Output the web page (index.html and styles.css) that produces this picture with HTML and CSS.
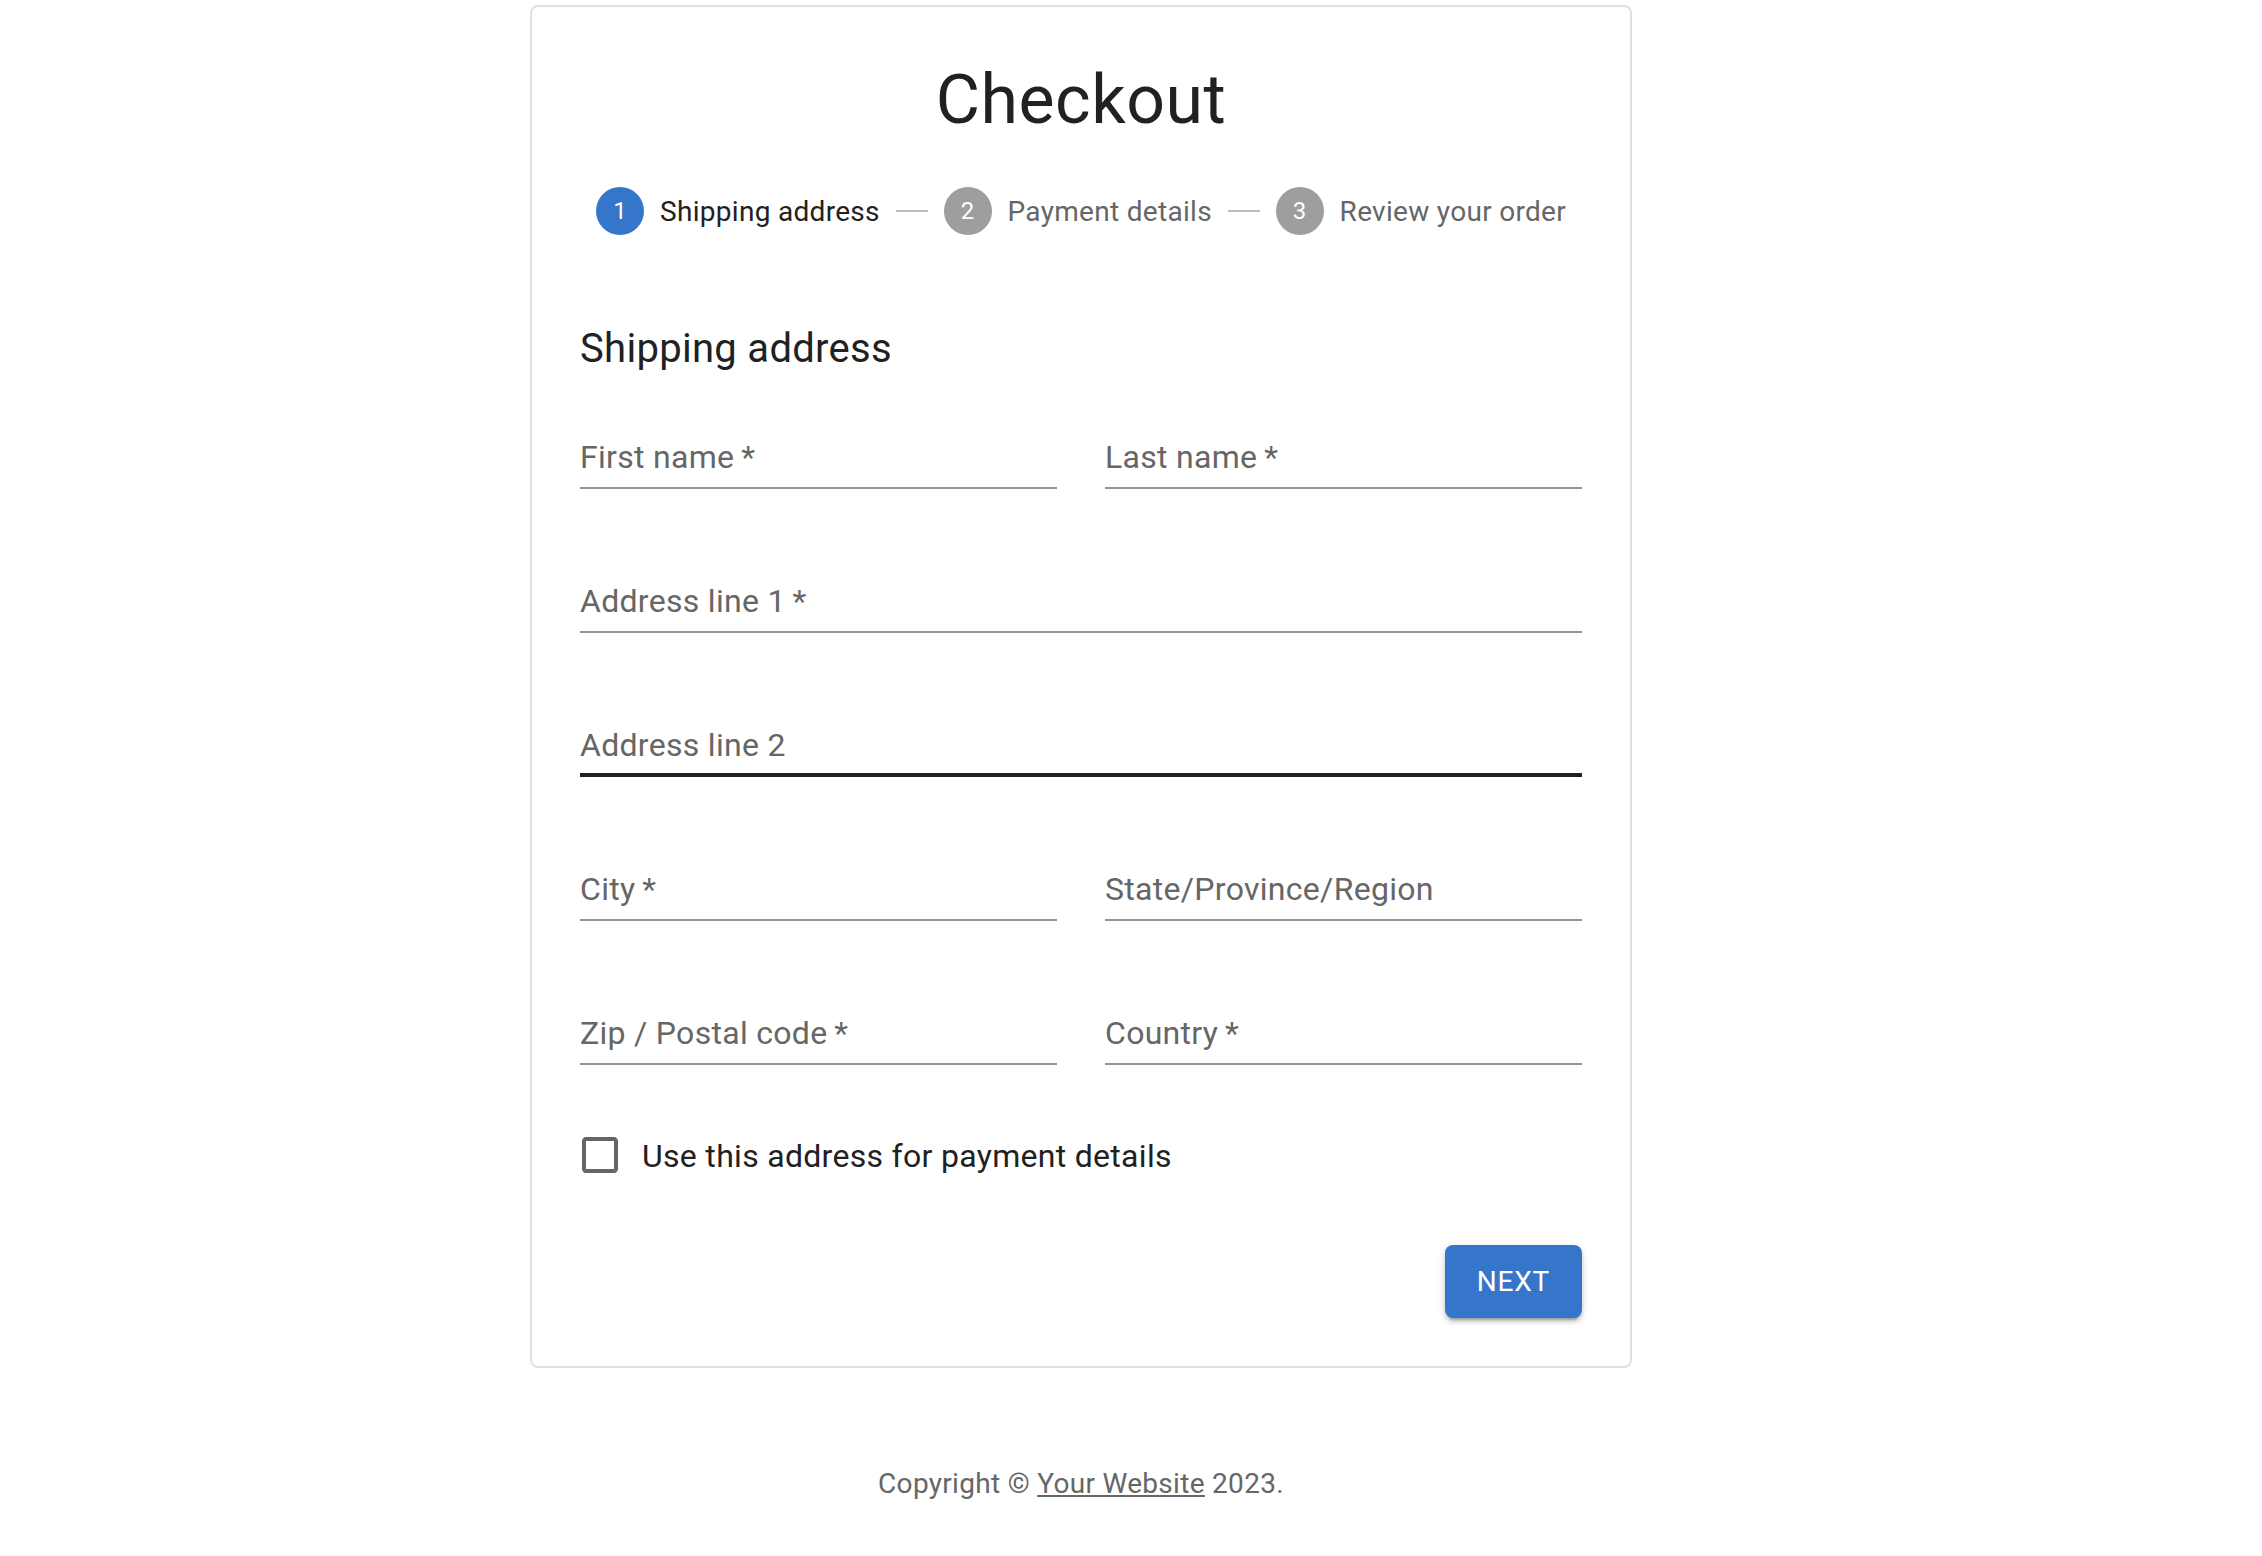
FILE: index.html
```html
<!DOCTYPE html>
<html lang="en">
<head>
<meta charset="utf-8">
<title>Checkout</title>
<link rel="stylesheet" href="styles.css">
</head>
<body>
<div class="page">
  <main class="container">
    <div class="card">
      <h1 class="title">Checkout</h1>
      <div class="stepper">
        <div class="step">
          <span class="step-icon active">1</span>
          <span class="step-label active">Shipping address</span>
        </div>
        <div class="connector"></div>
        <div class="step">
          <span class="step-icon">2</span>
          <span class="step-label">Payment details</span>
        </div>
        <div class="connector"></div>
        <div class="step">
          <span class="step-icon">3</span>
          <span class="step-label">Review your order</span>
        </div>
      </div>
      <h2 class="section-title">Shipping address</h2>
      <div class="form-grid">
        <div class="field"><span class="field-label">First name&thinsp;*</span></div>
        <div class="field"><span class="field-label">Last name&thinsp;*</span></div>
        <div class="field full"><span class="field-label">Address line 1&thinsp;*</span></div>
        <div class="field full hover"><span class="field-label">Address line 2</span></div>
        <div class="field"><span class="field-label">City&thinsp;*</span></div>
        <div class="field"><span class="field-label">State/Province/Region</span></div>
        <div class="field"><span class="field-label">Zip / Postal code&thinsp;*</span></div>
        <div class="field"><span class="field-label">Country&thinsp;*</span></div>
        <label class="check-row full">
          <span class="check-box">
            <svg viewBox="0 0 24 24" width="48" height="48"><path fill="#666666" d="M19 5v14H5V5h14m0-2H5c-1.1 0-2 .9-2 2v14c0 1.1.9 2 2 2h14c1.1 0 2-.9 2-2V5c0-1.1-.9-2-2-2z"/></svg>
          </span>
          <span class="check-label">Use this address for payment details</span>
        </label>
      </div>
      <div class="actions">
        <button class="btn" type="button">Next</button>
      </div>
    </div>
    <p class="copyright">Copyright © <a class="link" href="#">Your Website</a> 2023.</p>
  </main>
</div>
</body>
</html>
```

FILE: styles.css
```css
html, body {
  margin: 0;
  padding: 0;
  background: #ffffff;
}

body {
  font-family: Roboto, "Liberation Sans", Arial, sans-serif;
  color: #212121;
}

.page {
  width: 2162px;
}

.container {
  width: 1102px;
  margin: 0 auto;
}

.card {
  margin-top: 5px;
  border: 2px solid #e0e0e0;
  border-radius: 8px;
  padding: 48px;
  background: #ffffff;
}

.title {
  margin: 0;
  padding-top: 3px;
  font-size: 68px;
  font-weight: 400;
  line-height: 84px;
  letter-spacing: 0.00735em;
  text-align: center;
  color: #212121;
}

.stepper {
  display: flex;
  align-items: center;
  padding: 45px 0 80px;
}

.step {
  display: flex;
  align-items: center;
  padding: 0 16px;
}

.step-icon {
  width: 48px;
  height: 48px;
  border-radius: 50%;
  background: #9e9e9e;
  color: #ffffff;
  font-size: 24px;
  line-height: 48px;
  text-align: center;
  flex: none;
}

.step-icon.active {
  background: #3576cb;
}

.step-label {
  padding-left: 16px;
  padding-top: 2px;
  font-size: 28px;
  line-height: 40px;
  letter-spacing: 0.01071em;
  color: #666666;
  white-space: nowrap;
}

.step-label.active {
  color: #212121;
}

.connector {
  flex: 1 1 auto;
  border-top: 2px solid #bdbdbd;
}

.section-title {
  margin: 0 0 12px;
  padding-top: 2px;
  font-size: 40px;
  font-weight: 400;
  line-height: 64px;
  letter-spacing: 0.0075em;
  color: #212121;
}

.form-grid {
  display: grid;
  grid-template-columns: 1fr 1fr;
  column-gap: 48px;
  row-gap: 48px;
}

.full {
  grid-column: 1 / span 2;
}

.field {
  box-sizing: border-box;
  height: 96px;
  padding-top: 41px;
  border-bottom: 2px solid #949494;
}

.field.hover {
  border-bottom: 4px solid #212121;
}

.field-label {
  display: block;
  font-size: 32px;
  line-height: 46px;
  letter-spacing: 0.00938em;
  color: #666666;
}

.check-row {
  display: flex;
  align-items: center;
  margin-left: -22px;
  height: 84px;
  cursor: pointer;
}

.check-box {
  display: flex;
  padding: 18px;
}

.check-label {
  padding-top: 2px;
  font-size: 32px;
  line-height: 48px;
  letter-spacing: 0.00938em;
  color: #212121;
}

.actions {
  display: flex;
  justify-content: flex-end;
  margin-top: 48px;
}

.btn {
  font-family: Roboto, "Liberation Sans", Arial, sans-serif;
  font-size: 28px;
  font-weight: 400;
  line-height: 49px;
  letter-spacing: 0.02857em;
  text-transform: uppercase;
  color: #ffffff;
  background: #3576cb;
  border: none;
  border-radius: 8px;
  padding: 12px 32px;
  min-width: 128px;
  box-shadow: 0 6px 2px -4px rgba(0, 0, 0, 0.2), 0 4px 4px 0 rgba(0, 0, 0, 0.14), 0 2px 10px 0 rgba(0, 0, 0, 0.12);
}

.copyright {
  margin: 96px 0 0;
  font-size: 28px;
  line-height: 40px;
  letter-spacing: 0.01071em;
  text-align: center;
  color: #666666;
}

.link {
  color: inherit;
  text-decoration: underline;
}
```
